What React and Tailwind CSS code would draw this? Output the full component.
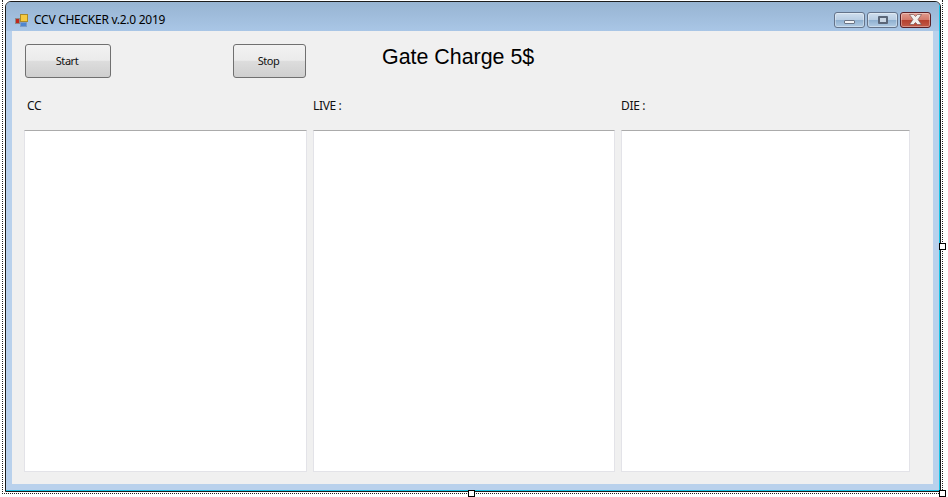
import React from 'react';

const uiFont = "font-['Noto_Sans','Open_Sans',sans-serif]";

function AppIcon() {
    return (
        <svg width="14" height="13" viewBox="0 0 14 13" className="shrink-0">
            <rect x="0.5" y="4.5" width="4" height="5" fill="#c0281c" stroke="#8a8a8a" />
            <rect x="5.5" y="0.5" width="7" height="7" fill="#f6c93f" stroke="#a98a2a" />
            <rect x="5.5" y="8.5" width="6" height="4" fill="#4f86d0" stroke="#7f9cc4" />
        </svg>
    );
}

function CaptionButton({ kind, children }) {
    const face = kind === 'close'
        ? 'bg-[linear-gradient(#e09a8e_0%,#d27a6c_48%,#b5402e_52%,#c25a48_100%)] border-[#5a1f26]'
        : 'bg-[linear-gradient(#cfdeee_0%,#b9cee4_48%,#8fb0d0_52%,#b2cbe3_100%)] border-[#64738a]';
    return (
        <div className={`h-[16px] w-[31px] rounded-[3px] border flex items-center justify-center shadow-[inset_0_0_0_1px_rgba(255,255,255,0.35)] ${face}`}>
            {children}
        </div>
    );
}

function PushButton({ label, className }) {
    return (
        <button className={`h-[34px] pr-[2px] rounded-[3px] border border-[#707070] bg-[linear-gradient(#f2f2f2_0%,#ebebeb_48%,#dddddd_50%,#cfcfcf_100%)] text-[11px] tracking-[-0.45px] text-[#111] ${className}`}>
            {label}
        </button>
    );
}

function TextBox({ className }) {
    return <div className={`h-[342px] bg-white border border-[#e3e3e8] border-t-[#ababab] ${className}`} />;
}

function Handle({ className }) {
    return <div className={`absolute h-[7px] w-[7px] bg-white border border-black ${className}`} />;
}

export default function App() {
    return (
        <div className={`relative w-[948px] h-[497px] bg-white overflow-hidden ${uiFont}`}>
            {/* designer selection frame */}
            <div className="w-[941px] h-[494px] ml-[2px] border-l border-r border-b border-dotted border-[#222] pl-[2px] pr-[1px] pt-[1px] pb-[1px]">
                {/* form window */}
                <div className="h-[491px] border border-[#1c1c1c] rounded-t-[6px] bg-[#b9d1ec] overflow-hidden">
                    <div className="h-full flex flex-col border-r border-b border-[#19c3e6]">
                        <div className="h-[29px] shrink-0 flex items-center pl-[9px] pr-[8px] pt-[7px] bg-[linear-gradient(#97b4d2,#a9c6e6)]">
                            <AppIcon />
                            <span className="ml-[5px] text-[12px] tracking-[-0.27px] text-black">CCV CHECKER v.2.0 2019</span>
                            <div className="ml-auto flex gap-[2px] -mt-[1px]">
                                <CaptionButton kind="min">
                                    <div className="mt-[5px] h-[4px] w-[11px] bg-[#f2f4f7] border border-[#6b7585] rounded-[1px]" />
                                </CaptionButton>
                                <CaptionButton kind="max">
                                    <div className="h-[8px] w-[10px] bg-[#c9d6e4] border-2 border-[#5a6678] rounded-[1px]" />
                                </CaptionButton>
                                <CaptionButton kind="close">
                                    <svg width="15" height="11" viewBox="0 0 15 11">
                                        <path d="M1.500 0.500h4l2 2 2-2h4l-3.500 5 3.500 5h-4l-2-2-2 2h-4l3.500-5z" fill="#f3f0ee" stroke="#6a4a4a" strokeWidth="0.6" />
                                    </svg>
                                </CaptionButton>
                            </div>
                        </div>
                        <div className="h-[453px] shrink-0 ml-[6px] mr-[6px] flex flex-col bg-[#f0f0f0] pl-[12px]">
                            <div className="flex h-[34px] mt-[13px] ml-[1px]">
                                <PushButton label="Start" className="w-[86px]" />
                                <PushButton label="Stop" className="w-[73px] ml-[122px]" />
                                <h1 className="ml-[76px] -mt-[4px] h-[34px] font-['Liberation_Sans',sans-serif] text-[21.4px] leading-[34px] text-black">Gate Charge 5$</h1>
                            </div>
                            <div className="flex mt-[19px] h-[18px] text-[12px] leading-[18px] tracking-[-0.35px] text-[#111]">
                                <span className="w-[289px] pl-[3px]">CC</span>
                                <span className="w-[308px]">LIVE :</span>
                                <span>DIE :</span>
                            </div>
                            <div className="flex gap-[6px] mt-[15px]">
                                <TextBox className="w-[283px]" />
                                <TextBox className="w-[302px]" />
                                <TextBox className="w-[289px]" />
                            </div>
                        </div>
                    </div>
                </div>
            </div>
            <Handle className="left-[939px] top-[243px]" />
            <Handle className="left-[468px] top-[490px]" />
            <Handle className="left-[939px] top-[490px]" />
        </div>
    );
}
